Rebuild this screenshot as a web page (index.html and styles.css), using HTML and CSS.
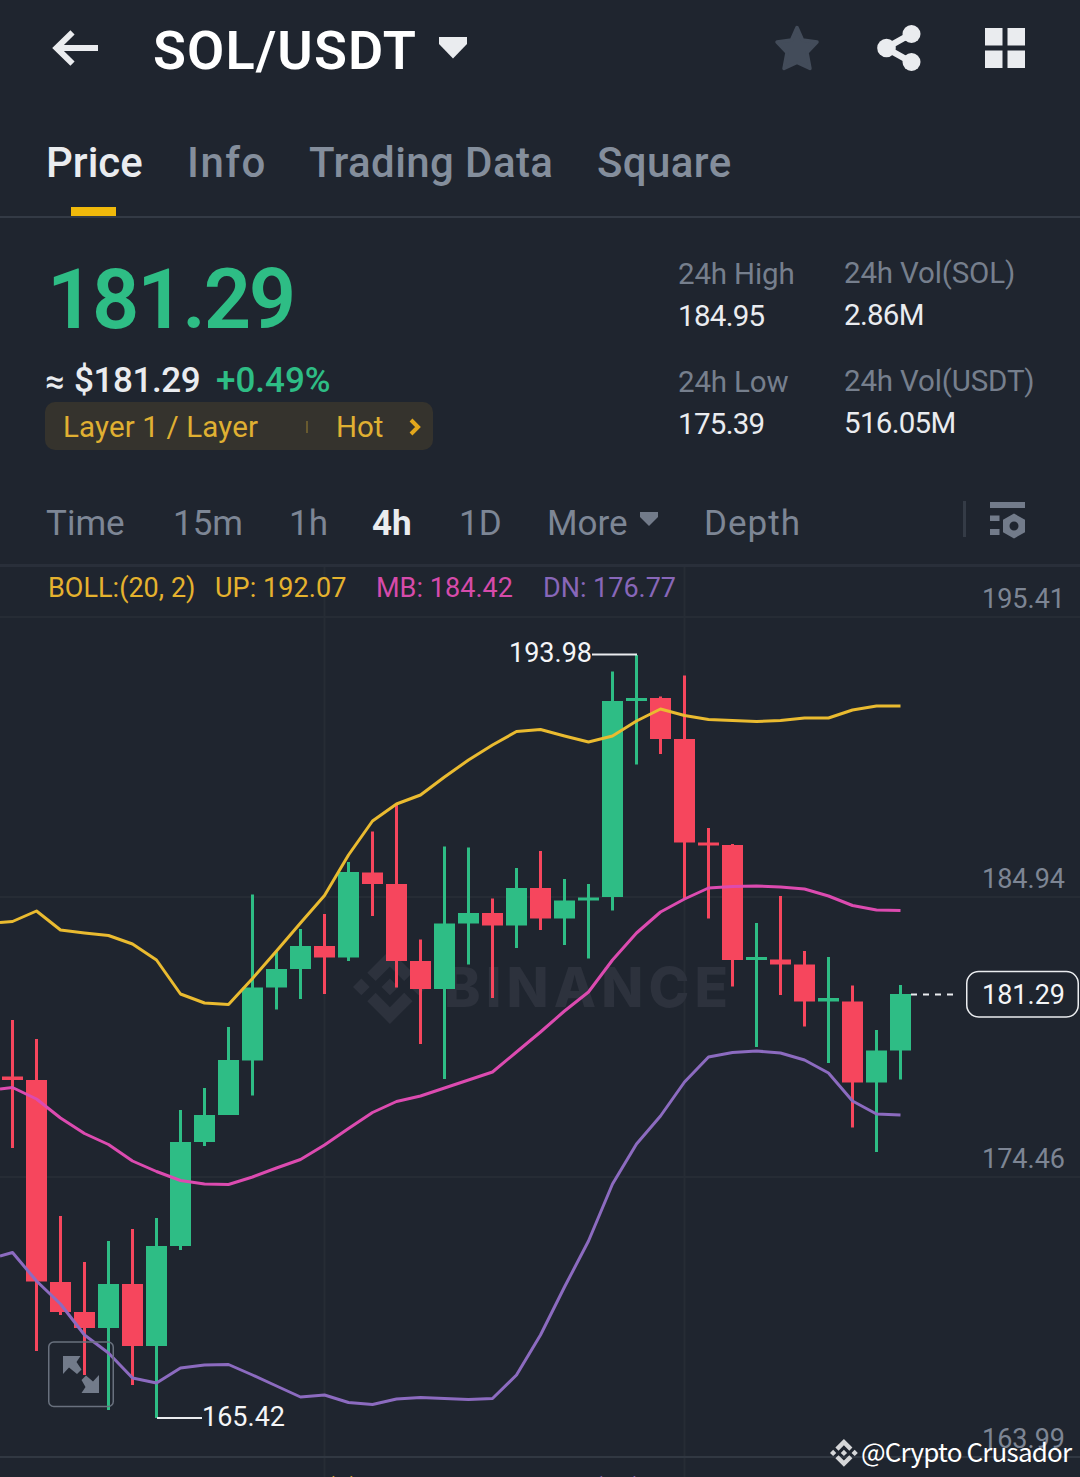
FILE: index.html
```
<!DOCTYPE html>
<html lang="en">
<head>
<meta charset="UTF-8">
<meta name="viewport" content="width=device-width, initial-scale=1.0">
<title>SOL/USDT</title>
<link rel="stylesheet" href="styles.css">
</head>
<body>

<header class="header">
  <svg class="back" width="46" height="36" viewBox="0 0 46 36">
    <path d="M20.5 2.3L4.5 18l16 15.7M4 18h42" fill="none" stroke="#eaecef" stroke-width="6"/>
  </svg>
  <h1>SOL/USDT</h1>
  <svg width="28" height="22" viewBox="0 0 28 22">
    <path d="M0 0h28v7L14 21.5 0 7z" fill="#eaecef"/>
  </svg>
  <svg class="star" width="46" height="48" viewBox="0 0 46 48">
    <path d="M23 3.500l5.500 12.500 14.500 2-10 10.500 3 16L23 38.500 10 44.500l3-16L3 18l14.500-2z" fill="#434c5a" stroke="#434c5a" stroke-width="3.500" stroke-linejoin="round"/>
  </svg>
  <svg class="share" width="44" height="46" viewBox="0 0 44 46">
    <path d="M34 9L9 23l25 14" fill="none" stroke="#eaecef" stroke-width="6.500"/>
    <circle cx="34.500" cy="9" r="9" fill="#eaecef"/>
    <circle cx="9.500" cy="23" r="9.300" fill="#eaecef"/>
    <circle cx="34.500" cy="37" r="9" fill="#eaecef"/>
  </svg>
  <svg class="grid" width="40" height="40" viewBox="0 0 40 40">
    <path d="M0 0h17.500v17.500H0zM22.500 0H40v17.500H22.500zM0 22.500h17.500V40H0zM22.500 22.500H40V40H22.500z" fill="#eaecef"/>
  </svg>
</header>

<nav class="tabs">
  <a class="tab active">Price</a>
  <a class="tab info">Info</a>
  <a class="tab wide">Trading Data</a>
  <a class="tab wide">Square</a>
</nav>

<section class="ticker">
  <div class="ticker-left">
    <div class="price">181.29</div>
    <div class="sub-price">
      <span class="approx">≈</span>
      <span class="usd">$181.29</span>
      <span class="change">+0.49%</span>
    </div>
    <div class="tags">
      <span class="layer">Layer 1 / Layer</span>
      <span class="tag-divider"></span>
      <span class="hot">Hot</span>
      <svg width="12" height="18" viewBox="0 0 12 18">
        <path d="M2 2L9 9l-7 7" fill="none" stroke="#e3a71c" stroke-width="4"/>
      </svg>
    </div>
  </div>
  <div class="stats">
    <div class="stat">
      <div class="label">24h High</div>
      <div class="value">184.95</div>
    </div>
    <div class="stat">
      <div class="label">24h Low</div>
      <div class="value">175.39</div>
    </div>
  </div>
  <div class="stats volume">
    <div class="stat">
      <div class="label">24h Vol(SOL)</div>
      <div class="value">2.86M</div>
    </div>
    <div class="stat">
      <div class="label">24h Vol(USDT)</div>
      <div class="value">516.05M</div>
    </div>
  </div>
</section>

<nav class="intervals">
  <a>Time</a>
  <a>15m</a>
  <a>1h</a>
  <a class="active">4h</a>
  <a>1D</a>
  <a>More</a>
  <svg class="more-arrow" width="18" height="15" viewBox="0 0 18 15">
    <path d="M0 0h18v5L9 14 0 5z" fill="#727b8a"/>
  </svg>
  <a class="depth">Depth</a>
  <span class="bar"></span>
  <svg class="settings" width="36" height="38" viewBox="0 0 36 38">
    <path d="M0 1h35v6H0zM0 14.500h9.500v5.500H0zM0 28h9.500v6H0z" fill="#727b8a"/>
    <path d="M24 12.500l11 6.300v12.400l-11 6.300-11-6.300V18.800zM24 20.500a4.500 4.500 0 1 0 0 9 4.500 4.500 0 0 0 0-9z" fill="#727b8a" fill-rule="evenodd"/>
  </svg>
</nav>

<svg class="chart" width="1080" height="910" viewBox="0 567 1080 910">
  <path class="gridline" d="M0 617H1080M0 897H1080M0 1177H1080M324.500 567V1477M684.500 567V1477"/>
  <path class="gridline strong" d="M0 1457H1080"/>

  <!-- background logo -->
  <path class="mark" transform="translate(353 950) scale(3.080)" d="M16.624 13.9202l2.7175 2.7154-7.353 7.353-7.353-7.352 2.7175-2.7164 4.6355 4.6595 4.6356-4.6595zm4.6366-4.6366L24 12l-2.7154 2.7164L18.5682 12l2.6924-2.7164zm-9.272.001l2.7163 2.6914-2.7164 2.7174v-.001L9.2721 12l2.7164-2.7154zm-9.2722-.001L5.4088 12l-2.6914 2.6924L0 12l2.7164-2.7164zM11.9885.0115l7.353 7.329-2.7174 2.7154-4.6356-4.6356-4.6355 4.6595-2.7174-2.7154 7.353-7.353z"/>
  <text class="mark mark-text" x="444" y="1007" textLength="284">BINANCE</text>

  <g id="candles"></g>
  <g id="lines"></g>

  <text class="up" x="48" y="597" textLength="147.500">BOLL:(20, 2)</text>
  <text class="up" x="215" y="597" textLength="131.500">UP: 192.07</text>
  <text class="mb" x="376" y="597" textLength="137">MB: 184.42</text>
  <text class="dn" x="543" y="597" textLength="133">DN: 176.77</text>

  <text class="axis" x="982" y="608">195.41</text>
  <text class="axis" x="982" y="888">184.94</text>
  <text class="axis" x="982" y="1168">174.46</text>
  <text class="axis" x="982" y="1448">163.99</text>

  <path class="pointer" d="M592 654.500H637M157 1418H202"/>
  <text class="peak" x="509" y="662">193.98</text>
  <text class="peak" x="202" y="1426">165.42</text>

  <path class="pointer dashed" d="M911 994.500H955"/>
  <rect class="pill" x="966.750" y="971.500" width="111.500" height="45.500" rx="12"/>
  <text class="peak" x="982" y="1004">181.29</text>

  <!-- fullscreen button -->
  <rect class="expand" x="48.750" y="1342" width="64.500" height="64.500" rx="5"/>
  <path fill="#727b8a" d="M63 1356H80.500L76.500 1362 81.500 1369.500 77 1374 69 1367.500 63 1374zM99 1393H81.500L85.500 1387 81.500 1380 86 1375.500 93 1381.500 99 1375z"/>

  <!-- volume row, cut by the bottom edge -->
  <text class="axis" x="47.500" y="1498">Vol:</text>
  <text class="up" x="284" y="1498">MA(5):</text>
  <text class="dn" x="552" y="1498">MA(10):</text>

  <path fill="#d5d6d8" transform="translate(830 1439) scale(1.160)" d="M16.624 13.9202l2.7175 2.7154-7.353 7.353-7.353-7.352 2.7175-2.7164 4.6355 4.6595 4.6356-4.6595zm4.6366-4.6366L24 12l-2.7154 2.7164L18.5682 12l2.6924-2.7164zm-9.272.001l2.7163 2.6914-2.7164 2.7174v-.001L9.2721 12l2.7164-2.7154zm-9.2722-.001L5.4088 12l-2.6914 2.6924L0 12l2.7164-2.7164zM11.9885.0115l7.353 7.329-2.7174 2.7154-4.6356-4.6356-4.6355 4.6595-2.7174-2.7154 7.353-7.353z"/>
  <text class="credit" x="861" y="1462" textLength="211">@Crypto Crusador</text>
</svg>

<script src="script.js"></script>
</body>
</html>
```
FILE: styles.css
```
body {
  margin: 0;
  width: 1080px;
  height: 1477px;
  overflow: hidden;
  background-color: #1f252f;
  color: #eaecef;
  font-family: Roboto, "Liberation Sans", sans-serif;
}

svg {
  display: block;
  flex: none;
}

/* header */
.header {
  display: flex;
  align-items: center;
  height: 101px;
  padding: 0 55px 0 52px;
  box-sizing: border-box;
}

.header svg {
  margin-bottom: 5px;
}

.header h1 {
  width: 286px;
  margin: 0 0 0 55px;
  font-size: 54px;
  font-weight: 600;
  line-height: 101px;
  letter-spacing: 1.100px;
  color: #fff;
}

.header .star {
  margin-left: auto;
}

.header .share {
  margin-left: 57px;
}

.header .grid {
  margin-left: 64px;
}

/* tabs */
.tabs {
  display: grid;
  grid-template-columns: 141px 122px 288px 200px;
  height: 115px;
  padding-left: 46px;
  border-bottom: 2px solid #333a45;
}

.tab {
  position: relative;
  padding-top: 37px;
  font-size: 42px;
  font-weight: 500;
  line-height: 50px;
  color: #848e9c;
  white-space: nowrap;
}

.tab.info {
  letter-spacing: 1.500px;
}

.tab.wide {
  letter-spacing: 0.400px;
}

.tab.active {
  color: #eaecef;
}

.tab.active::after {
  content: "";
  position: absolute;
  left: 25px;
  bottom: 0;
  width: 45px;
  height: 9px;
  background-color: #f0b90b;
}

/* ticker */
.ticker {
  display: flex;
  height: 264px;
  padding-left: 45px;
  box-sizing: border-box;
}

.ticker-left {
  width: 633px;
  padding-top: 42px;
}

.price {
  padding-left: 2px;
  font-size: 83px;
  font-weight: 600;
  line-height: 80px;
  letter-spacing: -2.300px;
  color: #2ebd85;
}

.sub-price {
  display: flex;
  margin-top: 21px;
  font-size: 35px;
  font-weight: 500;
  line-height: 40px;
}

.approx {
  width: 29px;
  font-size: 34px;
}

.usd {
  width: 142px;
  letter-spacing: -0.400px;
}

.change {
  color: #2ebd85;
}

.tags {
  display: flex;
  align-items: center;
  width: 388px;
  height: 48px;
  margin-top: 1px;
  padding: 1px 11px 0 18px;
  box-sizing: border-box;
  border-radius: 10px;
  background-color: #35332d;
  font-size: 29.500px;
  color: #e0b032;
}

.layer {
  width: 243px;
  letter-spacing: 0.150px;
}

.tag-divider {
  width: 2px;
  height: 12px;
  background-color: #685a2f;
}

.hot {
  margin-left: 28px;
  width: 73px;
}

.stats {
  width: 166px;
  padding-top: 35px;
}

.stats.volume {
  width: 220px;
  padding-top: 34px;
}

.stat {
  margin-bottom: 24px;
  font-size: 29.500px;
  line-height: 42px;
  white-space: nowrap;
}

.label {
  letter-spacing: -0.150px;
  color: #767f8d;
}

.value {
  letter-spacing: -0.700px;
}

/* intervals */
.intervals {
  display: grid;
  grid-template-columns: 127px 116px 83px 87px 88px 93px 64px 259px 27px 36px;
  align-items: center;
  height: 82px;
  padding-left: 46px;
  border-bottom: 3px solid #292f3a;
  font-size: 35px;
  color: #7d8695;
}

.intervals .active {
  font-weight: 700;
  color: #eaecef;
}

.intervals .depth {
  letter-spacing: 1px;
}

.more-arrow {
  margin-bottom: 7px;
}

.bar {
  width: 3px;
  height: 36px;
  margin-bottom: 8px;
  background-color: #343b46;
}

.settings {
  margin-bottom: 6px;
}

/* chart */
.chart {
  font-size: 27px;
}

.gridline {
  stroke: #262c35;
  stroke-width: 2;
}

.gridline.strong {
  stroke: #313842;
}

.mark {
  fill: #2d323d;
}

.mark-text {
  font-family: Inter, sans-serif;
  font-size: 55px;
  font-weight: 800;
}

.red {
  fill: #f6465d;
}

.green {
  fill: #2ebd85;
}

.line {
  stroke-width: 3;
  stroke-linejoin: round;
}

.up {
  fill: #e5b22e;
}

.mb {
  fill: #d64bab;
}

.dn {
  fill: #8867b9;
}

.line.up {
  fill: none;
  stroke: #eabb30;
}

.line.mb {
  fill: none;
  stroke: #dc4bb0;
}

.line.dn {
  fill: none;
  stroke: #8c6bc0;
}

.axis {
  fill: #7d8594;
}

.peak {
  fill: #f4f5f7;
}

.pointer {
  fill: none;
  stroke: #eaecef;
  stroke-width: 2;
}

.dashed {
  stroke-dasharray: 6 6;
}

.pill {
  fill: #1f252f;
  stroke: #eaecef;
  stroke-width: 1.500;
}

.expand {
  fill: none;
  stroke: #69717e;
  stroke-width: 1.500;
}

.credit {
  fill: #fff;
  font-family: "Noto Sans CJK SC", "Noto Sans", sans-serif;
  font-size: 26px;
}
```
FILE: script.js
```
// high, body top, body bottom, low, colour
var candles = [
  [1020, 1076.5, 1080, 1148, "red"],
  [1039, 1080, 1281.5, 1351, "red"],
  [1216, 1282, 1312, 1315, "red"],
  [1262, 1312, 1328, 1375, "red"],
  [1241, 1284, 1328, 1410, "green"],
  [1229, 1284, 1346, 1385, "red"],
  [1218, 1246, 1346, 1418, "green"],
  [1110, 1142, 1246, 1250, "green"],
  [1088, 1115, 1142, 1146, "green"],
  [1027, 1060, 1115, 1115, "green"],
  [894.5, 987.5, 1060.5, 1095.5, "green"],
  [952, 969, 987.5, 1009.5, "green"],
  [929, 946, 969, 999, "green"],
  [914, 946, 957.5, 994, "red"],
  [862, 872, 957.5, 961, "green"],
  [831.5, 872.5, 884, 916, "red"],
  [805, 884, 961, 987.5, "red"],
  [939.5, 961, 989, 1044, "red"],
  [846.5, 923.5, 989, 1079, "green"],
  [847.5, 913, 923.5, 964.5, "green"],
  [898.5, 913, 925.5, 998, "red"],
  [868, 888, 925.5, 948, "green"],
  [851, 888, 918.5, 930, "red"],
  [879, 900.5, 918.5, 945, "green"],
  [884, 897.5, 900.5, 958.5, "green"],
  [671.5, 701, 897, 910.5, "green"],
  [655, 698, 701, 764.5, "green"],
  [696.5, 698, 739, 754, "red"],
  [675.5, 739, 842.5, 898, "red"],
  [828, 842.5, 845.5, 918.5, "red"],
  [844, 845, 960, 986.5, "red"],
  [923, 957, 960, 1047, "green"],
  [896, 959.5, 964.5, 995, "red"],
  [951, 964.5, 1001.5, 1026.5, "red"],
  [957, 998, 1001.5, 1063, "green"],
  [985.5, 1001.5, 1082.5, 1127.5, "red"],
  [1030, 1050.5, 1082.5, 1152, "green"],
  [985, 994, 1050.5, 1079.5, "green"]
];

// first value is at the left edge, the rest at the candles
var lines = {
  up: [922.5, 921.5, 911, 930, 933, 935.5, 944, 960, 994, 1003, 1004.5, 978.5, 951, 923, 895.5, 855, 821, 804, 795, 777, 760, 745, 731.5, 729.5, 736, 742, 736, 721, 709, 715.5, 719.5, 720.5, 721.5, 720.5, 718, 718, 710, 706, 706],
  mb: [1089, 1087.5, 1099, 1118, 1133.5, 1144.5, 1161, 1171.5, 1180.5, 1184, 1184.5, 1177, 1168, 1159.5, 1145, 1128.5, 1112.5, 1101.5, 1096, 1088, 1080, 1072, 1052, 1032, 1011, 992, 960, 933, 912, 899, 888, 886.5, 886, 887, 889, 896, 905.5, 910, 910.5],
  dn: [1256, 1252.5, 1281, 1304, 1335, 1353, 1378, 1383, 1368, 1365, 1364.5, 1375, 1386, 1397, 1395, 1402.5, 1404.5, 1399, 1397.5, 1398.5, 1399.5, 1398.5, 1375, 1335, 1287, 1241, 1184, 1144, 1116, 1082, 1057, 1052.5, 1051, 1053, 1060, 1073, 1101, 1114, 1115]
};

function centerX(i) {
  return 12.5 + i * 24;
}

function addShape(parent, name, attrs) {
  var el = document.createElementNS("http://www.w3.org/2000/svg", name);
  for (var key in attrs) {
    el.setAttribute(key, attrs[key]);
  }
  document.getElementById(parent).appendChild(el);
}

candles.forEach(function (c, i) {
  var x = centerX(i);
  addShape("candles", "rect", { x: x - 1.5, y: c[0], width: 3, height: c[3] - c[0], class: c[4] });
  addShape("candles", "rect", { x: x - 10.5, y: c[1], width: 21, height: c[2] - c[1], class: c[4] });
});

for (var name in lines) {
  var points = lines[name].map(function (y, i) {
    return (i === 0 ? 0 : centerX(i - 1)) + "," + y;
  });
  addShape("lines", "polyline", { points: points.join(" "), class: "line " + name });
}
```
